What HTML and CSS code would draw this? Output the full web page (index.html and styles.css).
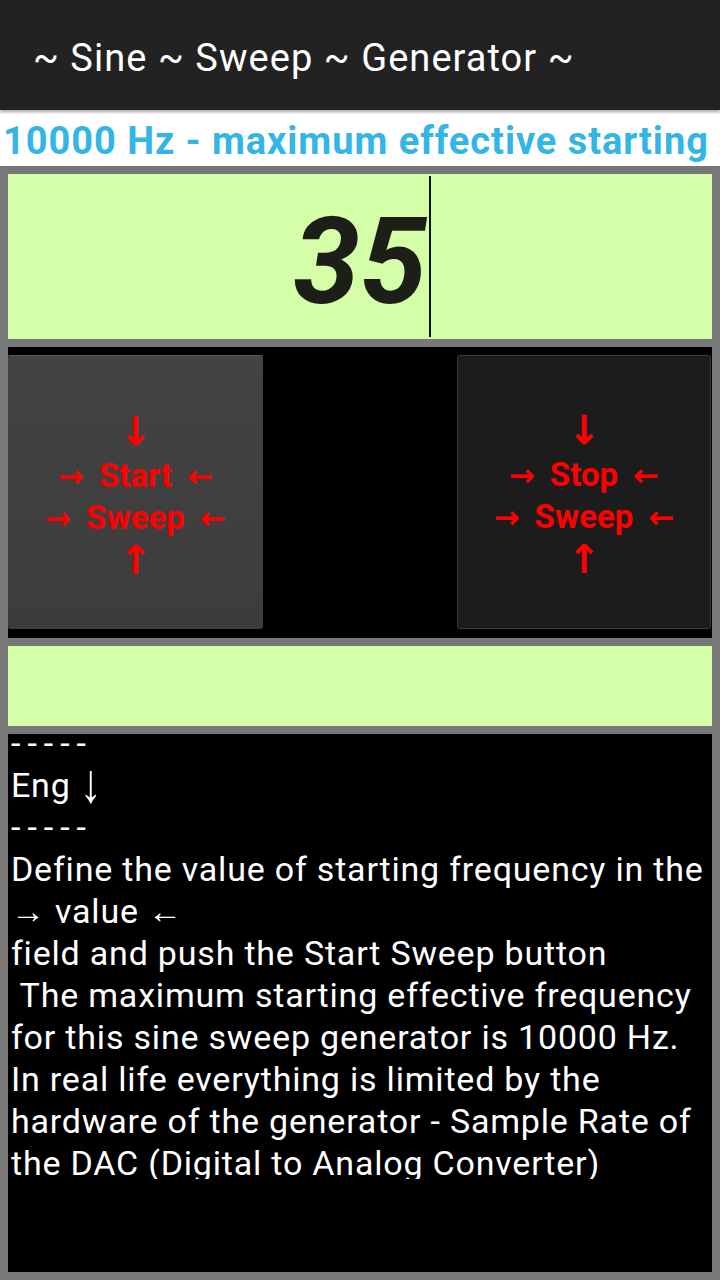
FILE: index.html
```html
<!DOCTYPE html>
<html>
<head>
<meta charset="utf-8">
<link rel="stylesheet" href="styles.css">
</head>
<body>
<header class="actionbar">~ Sine ~ Sweep ~ Generator ~</header>
<div class="hint">10000 Hz - maximum effective starting</div>
<main class="content">
  <div class="field"><span class="value">35</span><span class="cursor"></span></div>
  <div class="buttons">
    <div class="btn btn-start"><div class="label"><span class="varr">↓</span><br><span class="harr">→</span> Start <span class="harr">←</span><br><span class="harr">→</span> Sweep <span class="harr">←</span><br><span class="varr">↑</span></div></div>
    <div class="btn btn-stop"><div class="label"><span class="varr">↓</span><br><span class="harr">→</span> Stop <span class="harr">←</span><br><span class="harr">→</span> Sweep <span class="harr">←</span><br><span class="varr">↑</span></div></div>
  </div>
  <div class="field2"></div>
  <div class="info">
    <div class="info-clip">
      <div class="info-text">
<div class="line dashes">-----</div>
<div class="line">Eng <span class="tarr">↓</span></div>
<div class="line dashes">-----</div>
<div class="line">Define the value of starting frequency in the</div>
<div class="line">→ value ←</div>
<div class="line">field and push the Start Sweep button</div>
<div class="line"> The maximum starting effective frequency</div>
<div class="line">for this sine sweep generator is 10000 Hz.</div>
<div class="line">In real life everything is limited by the</div>
<div class="line">hardware of the generator - Sample Rate of</div>
<div class="line">the DAC (Digital to Analog Converter)</div>
      </div>
    </div>
  </div>
</main>
</body>
</html>
```
FILE: styles.css
```css
* { box-sizing: border-box; }
html, body { margin: 0; padding: 0; }
body {
  width: 720px;
  height: 1280px;
  overflow: hidden;
  background: #787878;
  font-family: Roboto, "Liberation Sans", sans-serif;
}
.actionbar {
  position: relative;
  z-index: 2;
  height: 110px;
  background: #222222;
  color: #ffffff;
  font-size: 38px;
  letter-spacing: 1.05px;
  padding-left: 33px;
  padding-top: 6px;
  display: flex;
  align-items: center;
  box-shadow: 0 2px 3px rgba(0,0,0,0.35);
}
.hint {
  height: 56px;
  background: #ffffff;
  color: #33b5e5;
  font-weight: 700;
  font-size: 38px;
  letter-spacing: 0.95px;
  line-height: 53px;
  padding-top: 5px;
  padding-left: 3px;
  white-space: nowrap;
  overflow: hidden;
}
.content {
  padding: 8px 8px 8px 8px;
  display: flex;
  flex-direction: column;
  gap: 8px;
}
.field {
  height: 165px;
  background: #d4ffa8;
  display: flex;
  justify-content: center;
  align-items: center;
  padding-top: 10px;
}
.value {
  font-size: 120px;
  font-weight: 700;
  font-style: italic;
  color: #1c1f18;
  line-height: 1;
  margin-left: 4px;
}
.cursor {
  align-self: stretch;
  width: 2px;
  background: #111;
  margin: -8px 0 2px 2px;
}
.buttons {
  height: 291px;
  background: #000000;
  display: flex;
  justify-content: space-between;
  padding: 8px 1px 9px 0;
}
.btn {
  width: 255px;
  border-radius: 2px;
  display: flex;
  align-items: center;
  justify-content: center;
  padding-top: 8px;
}
.btn-start {
  background: linear-gradient(#434343, #3c3c3c);
  border-top: 1px solid #5a5a5a;
}
.btn-stop {
  width: 254px;
  background: #1c1c1c;
  border: 1px solid #3a3a3a;
}
.label {
  color: #ff0000;
  font-weight: 700;
  font-size: 33px;
  line-height: 42px;
  text-align: center;
  white-space: nowrap;
  word-spacing: 7px;
}
.harr {
  font-family: "DejaVu Sans", sans-serif;
  font-weight: 700;
  font-size: 31px;
}
.varr {
  font-family: "DejaVu Sans", sans-serif;
  font-weight: 700;
  font-size: 40px;
}
.field2 {
  height: 80px;
  background: #d4ffa8;
}
.info {
  height: 538px;
  background: #000000;
  padding-left: 3px;
}
.info-clip {
  height: 445px;
  overflow: hidden;
}
.info-text {
  margin-top: -12px;
  color: #ffffff;
  font-size: 34px;
  letter-spacing: 0.8px;
  line-height: 42px;
}
.line {
  height: 42px;
  white-space: pre;
}
.dashes {
  letter-spacing: 7px;
}
.tarr {
  display: inline-block;
  font-size: 44px;
  line-height: 30px;
  vertical-align: top;
  margin-top: 4px;
  transform: scaleY(1.25);
}
```
